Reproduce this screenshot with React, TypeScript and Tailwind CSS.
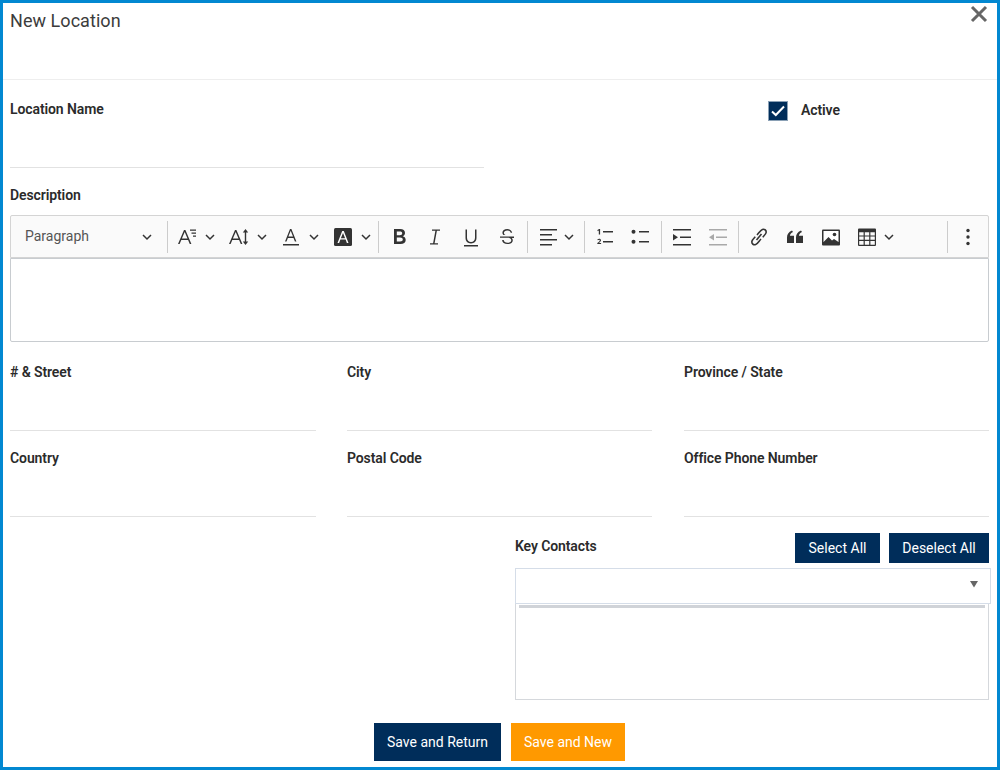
import type { ReactNode } from "react";

const font = { fontFamily: "Roboto, sans-serif" };

function Chevron({ className = "" }: { className?: string }) {
  return (
    <svg width="10" height="10" viewBox="0 0 10 10" fill="none" stroke="#333" strokeWidth="1.5" className={className}>
      <path d="M1 3l4 4 4-4" />
    </svg>
  );
}

function Icon({ children, muted }: { children: ReactNode; muted?: boolean }) {
  return (
    <div className={`w-[36px] h-[36px] flex items-center justify-center ${muted ? "opacity-40" : ""}`}>
      <svg width="24" height="24" viewBox="0 0 24 24" fill="#333">
        {children}
      </svg>
    </div>
  );
}

function Drop({ children }: { children: ReactNode }) {
  return (
    <div className="w-[52px] h-[36px] flex items-center pl-[7px] gap-[4px]">
      <svg width="24" height="24" viewBox="0 0 24 24" fill="#333" className="shrink-0">
        {children}
      </svg>
      <Chevron className="ml-[2px]" />
    </div>
  );
}

function Sep({ className = "" }: { className?: string }) {
  return <div className={`w-px h-[32px] bg-[#ccc] shrink-0 ${className}`} />;
}

function Label({ children, className = "" }: { children: ReactNode; className?: string }) {
  return <div className={`text-[14px] font-semibold tracking-[-0.1px] text-[#2b2b2b] leading-[20px] ${className}`}>{children}</div>;
}

function Field({ label, className = "" }: { label: string; className?: string }) {
  return (
    <div className={`border-b border-[#e2e2e2] ${className}`}>
      <Label>{label}</Label>
    </div>
  );
}

function Btn({ children, className = "" }: { children: ReactNode; className?: string }) {
  return (
    <button className={`text-white text-[14px] flex items-center justify-center ${className}`} style={font}>
      {children}
    </button>
  );
}

export default function App() {
  return (
    <div className="w-[1000px] h-[770px] bg-white border-[3px] border-[#0288d1] text-[#333] overflow-hidden relative" style={font}>
      <div className="h-[77px] border-b border-[#eeeeee] px-[7px] pt-[7px] text-[18px] leading-[22px] text-[#3c3c3c] tracking-[0.05px]">New Location</div>
      <svg width="18" height="18" viewBox="0 0 18 18" className="absolute right-[9px] top-[2px]" stroke="#666" strokeWidth="3" fill="none">
        <path d="M2 2l14 14M16 2L2 16" />
      </svg>

      <div className="px-[7px]">
        <div className="flex h-[88px]">
          <div className="w-[474px] border-b border-[#e2e2e2] pt-[19px]">
            <Label>Location Name</Label>
          </div>
          <div className="ml-[284px] pt-[21px] flex items-start">
            <div className="w-[20px] h-[20px] bg-[#002d5a] border border-[#8aa0b5] flex items-center justify-center">
              <svg width="16" height="16" viewBox="0 0 16 16" fill="none" stroke="white" strokeWidth="2">
                <path d="M2 8.500l3.800 3.500L14 3.500" />
              </svg>
            </div>
            <Label className="ml-[13px] -mt-[1px]">Active</Label>
          </div>
        </div>

        <Label className="mt-[17px]">Description</Label>

        <div className="mt-[10px] h-[43px] w-[979px] border border-[#d4d4d4] bg-[#fafafa] rounded-t-[2px] flex items-center">
          <div className="w-[156px] h-[36px] flex items-center justify-between pl-[14px] pr-[15px] text-[14px] text-[#555] shrink-0">
            <span>Paragraph</span>
            <Chevron />
          </div>
          <Sep />
          <Drop>
            <path d="M3 19L9 5h1.400l6 14h-1.600l-1.700-4H6.300l-1.700 4H3zm3.900-5.400h5.600L9.700 7z" />
            <path d="M15 4.500h6v1.200h-6zM16.500 7.500H21v1.200h-4.500zM18 10.500h3v1.200h-3z" />
          </Drop>
          <Drop>
            <path d="M2 19L8 5h1.400l6 14h-1.600l-1.700-4H5.300l-1.700 4H2zm3.900-5.400h5.600L8.700 7z" />
            <path d="M19.200 7.500v9h2l-2.700 3.500-2.700-3.500h2v-9h-2L18.500 4l2.700 3.500z" />
          </Drop>
          <Drop>
            <path d="M6 16.500L11 4h1.400l5 12.500h-1.500l-1.400-3.600H8.900l-1.400 3.600H6zm3.400-5h4.600L11.700 5.800z" />
            <rect x="4" y="19" width="16" height="1.500" />
          </Drop>
          <Drop>
            <rect x="3" y="3" width="18" height="18" rx="1.500" />
            <path fill="#fff" d="M6.500 18L11.200 6h1.600l4.700 12h-1.600l-1.300-3.400H9.400L8.100 18H6.500zm3.400-4.800h4.200L12 7.900z" />
          </Drop>
          <Sep className="ml-[2px]" />
          <div className="ml-[2px] flex">
            <Icon>
              <path d="M7 4h6.200c3 0 4.800 1.500 4.800 3.900 0 1.600-.9 2.800-2.300 3.300 1.900.4 3 1.800 3 3.700 0 2.700-2 4.100-5.200 4.100H7V4zm2.800 2.400v3.900h3c1.600 0 2.400-.7 2.400-2s-.8-1.900-2.400-1.900h-3zm0 6.200v4H13c1.800 0 2.800-.7 2.800-2s-1-2-2.800-2H9.800z" />
            </Icon>
            <Icon>
              <path d="M9 4.500h8v1.300h-3.100l-2.300 12.400H15v1.300H7v-1.300h3.100l2.300-12.400H9z" />
            </Icon>
            <Icon>
              <path d="M6.500 4.500H8v8.300c0 2.700 1.500 4.200 4 4.200s4-1.500 4-4.200V4.500h1.500v8.300c0 3.600-2.100 5.600-5.500 5.600s-5.500-2-5.500-5.600zM5 20h14v1.400H5z" />
            </Icon>
            <Icon>
              <path d="M12.300 4c-2.900 0-4.900 1.500-4.900 3.700 0 1 .4 1.800 1 2.400h2.300C9.600 9.600 8.900 8.800 8.900 7.700c0-1.300 1.300-2.300 3.400-2.300 1.900 0 3.200.9 3.400 2.400h1.500C16.500 5.500 14.800 4 12.300 4zM5 11.400v1.300h8.800c1.700.5 2.500 1.300 2.500 2.500 0 1.500-1.500 2.500-3.800 2.500-2.200 0-3.700-1-3.800-2.600H7.100c.1 2.400 2.300 4 5.400 4 3.200 0 5.300-1.500 5.300-3.900 0-1-.4-1.700-1-2.300H19v-1.500z" />
            </Icon>
          </div>
          <Sep className="ml-[2px]" />
          <div className="w-[56px] h-[36px] flex items-center pl-[11px] shrink-0">
            <svg width="20" height="20" viewBox="0 0 20 20" fill="#333" className="shrink-0">
              <path d="M1 3h17v1.500H1zM1 8h12v1.500H1zM1 13h17v1.500H1zM1 18h12v1.500H1z" transform="translate(0 -1)" />
            </svg>
            <Chevron className="ml-[5px]" />
          </div>
          <Sep />
          <div className="flex ml-[1px]">
            <Icon>
              <path d="M5.500 5l1.600-1h1v5.500H6.800V5.500l-1.300.7zM5.300 19v-1c1.700-1.300 2.500-2 2.500-2.600 0-.4-.3-.6-.7-.6-.5 0-.9.200-1.300.5l-.5-.8c.5-.5 1.200-.8 1.900-.8 1.100 0 1.800.6 1.800 1.600 0 .9-.8 1.800-2 2.700h2.100v1zM11 6h10v1.500H11zM11 16h10v1.500H11z" />
            </Icon>
            <Icon>
              <circle cx="5.500" cy="6.700" r="2" />
              <circle cx="5.500" cy="16.700" r="2" />
              <path d="M11 6h10v1.500H11zM11 16h10v1.500H11z" />
            </Icon>
          </div>
          <Sep className="ml-[3px]" />
          <div className="flex ml-[2px]">
            <Icon>
              <path d="M3 4h18v1.500H3zM10 11.500h11V13H10zM3 19h18v1.500H3z" />
              <path d="M3 9l5 3.200L3 15.500z" />
            </Icon>
            <Icon muted>
              <path d="M3 4h18v1.500H3zM10 11.500h11V13H10zM3 19h18v1.500H3z" />
              <path d="M8 9l-5 3.200L8 15.500z" />
            </Icon>
          </div>
          <Sep className="ml-[2px]" />
          <div className="flex ml-[2px]">
            <Icon>
              <g fill="none" stroke="#333" strokeWidth="1.600">
                <path d="M10 10c1.800-1.800 3.400-4.800 5.400-5.600 1.900-.7 3.900.7 3.800 2.900-.1 1.800-2.200 3.600-3.500 5" />
                <path d="M14 14c-1.800 1.800-3.400 4.800-5.400 5.600-1.900.7-3.900-.7-3.800-2.900.1-1.800 2.200-3.600 3.500-5" />
                <path d="M9.500 15L14.500 9" />
              </g>
            </Icon>
            <Icon>
              <path d="M4 18v-5.500C4 9.500 5.500 7 9 5.500l1 1.500c-2 1-3 2.300-3.100 3.800H11V18zM13 18v-5.500c0-3 1.500-5.500 5-7l1 1.500c-2 1-3 2.300-3.100 3.800H20V18z" />
            </Icon>
            <Icon>
              <rect x="3" y="4.500" width="18" height="16" rx="1" />
              <rect x="4.500" y="6" width="15" height="11" fill="#fff" />
              <path d="M4.500 17l5-5 3.500 3.500 2-1.500 4.500 3z" />
              <circle cx="15.500" cy="9.500" r="1.800" />
            </Icon>
            <div className="w-[52px] h-[36px] flex items-center pl-[6px] shrink-0">
              <svg width="24" height="24" viewBox="0 0 24 24" fill="#333" className="shrink-0">
                <path fillRule="evenodd" d="M4 3.500h16a1 1 0 011 1v15.500a1 1 0 01-1 1H4a1 1 0 01-1-1V4.500a1 1 0 011-1zm.2 3.700v3.200h4.400V7.200zm5.600 0v3.200h4.400V7.200zm5.600 0v3.200h4.400V7.200zM4.200 11.600v3.200h4.400v-3.200zm5.600 0v3.200h4.400v-3.200zm5.600 0v3.200h4.400v-3.200zM4.200 16v3.800h4.400V16zm5.600 0v3.800h4.400V16zm5.600 0v3.800h4.400V16z" />
              </svg>
              <Chevron className="ml-[5px]" />
            </div>
          </div>
          <Sep className="ml-[46px]" />
          <div className="flex-1 flex justify-center">
            <svg width="4" height="18" viewBox="0 0 4 18" fill="#333">
              <circle cx="2" cy="2.500" r="1.700" />
              <circle cx="2" cy="9" r="1.700" />
              <circle cx="2" cy="15.500" r="1.700" />
            </svg>
          </div>
        </div>

        <div className="h-[84px] w-[979px] border border-[#c8ccd0] rounded-b-[2px]" />

        <div className="grid grid-cols-[306px_305px_306px] gap-x-[31px] w-[979px] mt-[20px]">
          <Field label="# & Street" className="h-[69px]" />
          <Field label="City" className="h-[69px]" />
          <Field label="Province / State" className="h-[69px] ml-[1px]" />
        </div>
        <div className="grid grid-cols-[306px_305px_306px] gap-x-[31px] w-[979px]">
          <Field label="Country" className="h-[86px] pt-[17px]" />
          <Field label="Postal Code" className="h-[86px] pt-[17px]" />
          <Field label="Office Phone Number" className="h-[86px] pt-[17px] ml-[1px]" />
        </div>

        <div className="ml-[505px] w-[476px] mt-[15px]">
          <div className="flex items-start justify-between w-[474px] h-[36px]">
            <Label className="mt-[4px]">Key Contacts</Label>
            <div className="flex gap-[9px] mt-[1px]">
              <Btn className="w-[85px] h-[30px] bg-[#002d5a]">Select All</Btn>
              <Btn className="w-[100px] h-[30px] bg-[#002d5a]">Deselect All</Btn>
            </div>
          </div>
          <div className="h-[36px] w-[476px] border border-[#d5dde8] flex items-center justify-end pr-[11px] pb-[3px]">
            <svg width="10" height="7" viewBox="0 0 10 7" fill="#666">
              <path d="M1 0h8L5 6.500z" />
            </svg>
          </div>
          <div className="h-[96px] w-[474px] border border-[#d5d8dc] border-t-0 px-[3px] pt-[1px]">
            <div className="h-[3px] bg-[#d0d3d8]" />
          </div>
        </div>

        <div className="flex justify-center gap-[10px] mt-[23px] pr-[1px]">
          <Btn className="w-[127px] h-[38px] bg-[#002d5a]">Save and Return</Btn>
          <Btn className="w-[114px] h-[38px] bg-[#ff9900]">Save and New</Btn>
        </div>
      </div>
    </div>
  );
}
